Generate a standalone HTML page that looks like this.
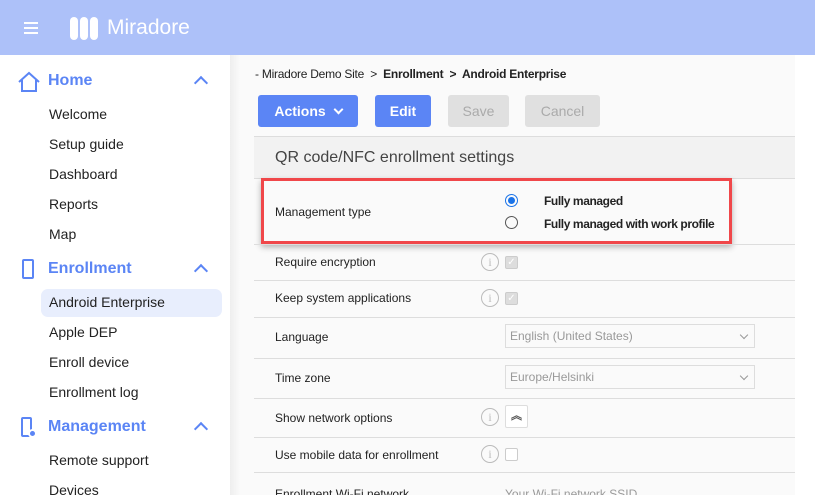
<!DOCTYPE html>
<html><head><meta charset="utf-8"><style>
*{margin:0;padding:0;box-sizing:border-box}
html,body{width:815px;height:495px;overflow:hidden}
body{font-family:"Liberation Sans",sans-serif;background:#fafafa;position:relative}
.hdr{position:absolute;left:0;top:0;width:815px;height:55px;background:#adc1f9}
.side{position:absolute;left:0;top:55px;width:230px;height:440px;background:#fff}
.shadow{position:absolute;left:230px;top:55px;width:10px;height:440px;background:linear-gradient(90deg,#eee,#fafafa)}
.sec{position:absolute;left:48px;font-size:16px;font-weight:bold;color:#5b85f5}
.item{position:absolute;left:49px;font-size:14px;color:#222}
.chev{position:absolute;left:196px;width:10px;height:10px;border-left:2px solid #5b85f5;border-top:2px solid #5b85f5;transform:rotate(45deg)}
.btn{position:absolute;top:95px;height:32px;border-radius:3px;font-size:14px;font-weight:bold;display:flex;align-items:center;justify-content:center}
.row{position:absolute;left:254px;width:541px;border-top:1px solid #ddd;font-size:12px;color:#222}
.row .l{position:absolute;left:21px}
.info{position:absolute;left:227px;width:18px;height:18px;border:1px solid #bbb;border-radius:50%;color:#bbb;font-size:12px;text-align:center;line-height:16px;font-family:"Liberation Serif",serif}
.cb{position:absolute;left:251px;width:13px;height:13px;border:1px solid #ccc;border-radius:2px;background:#ddd;color:#fff;font-size:10px;text-align:center;line-height:11px}
.sel{position:absolute;left:251px;width:250px;height:24px;border:1px solid #ddd;background:#fafafa;color:#999;font-size:12px;padding:4px 4px}
.sel:after{content:"";position:absolute;right:7px;top:7px;width:5px;height:5px;border-right:1.5px solid #999;border-bottom:1.5px solid #999;transform:rotate(45deg)}
</style></head><body>
<div class="hdr">
 <div style="position:absolute;left:24px;top:22px;width:14px;height:2px;background:#fff"></div>
 <div style="position:absolute;left:24px;top:27px;width:14px;height:2px;background:#fff"></div>
 <div style="position:absolute;left:24px;top:32px;width:14px;height:2px;background:#fff"></div>
 <div style="position:absolute;left:70px;top:17px;width:8px;height:23px;border-radius:4px;background:#fff"></div>
 <div style="position:absolute;left:80px;top:17px;width:8px;height:23px;border-radius:4px;background:#fff"></div>
 <div style="position:absolute;left:90px;top:17px;width:8px;height:23px;border-radius:4px;background:#fff"></div>
 <div style="position:absolute;left:107px;top:16px;font-size:21px;color:#fff">Miradore</div>
</div>
<div class="side">
 <svg style="position:absolute;left:17px;top:16px" width="24" height="22" viewBox="0 0 24 22"><path d="M2 11 L12 2 L22 11 M5 9 V20 H19 V9" fill="none" stroke="#5b85f5" stroke-width="2"/></svg>
 <div class="sec" style="top:17px">Home</div><div class="chev" style="top:23px"></div>
 <div class="item" style="top:51px">Welcome</div>
 <div class="item" style="top:81px">Setup guide</div>
 <div class="item" style="top:111px">Dashboard</div>
 <div class="item" style="top:141px">Reports</div>
 <div class="item" style="top:171px">Map</div>
 <div style="position:absolute;left:22px;top:204px;width:12px;height:20px;border:2px solid #5b85f5;border-radius:2px"></div>
 <div class="sec" style="top:205px">Enrollment</div><div class="chev" style="top:211px"></div>
 <div style="position:absolute;left:41px;top:234px;width:181px;height:28px;border-radius:7px;background:#e8eefd"></div>
 <div class="item" style="top:239px">Android Enterprise</div>
 <div class="item" style="top:269px">Apple DEP</div>
 <div class="item" style="top:299px">Enroll device</div>
 <div class="item" style="top:329px">Enrollment log</div>
 <div style="position:absolute;left:21px;top:362px;width:11px;height:20px;border:2px solid #5b85f5;border-radius:2px"></div>
 <div style="position:absolute;left:28px;top:374px;width:9px;height:9px;border-radius:50%;background:#5b85f5;border:2px solid #fff"></div>
 <div class="sec" style="top:363px">Management</div><div class="chev" style="top:369px"></div>
 <div class="item" style="top:397px">Remote support</div>
 <div class="item" style="top:427px">Devices</div>
</div>
<div class="shadow"></div>
<div style="position:absolute;left:255px;top:67px;font-size:12px;color:#222;letter-spacing:-0.25px">- Miradore Demo Site &nbsp;&gt;&nbsp; <b>Enrollment &nbsp;&gt;&nbsp; Android Enterprise</b></div>
<div class="btn" style="left:258px;width:100px;background:#5b85f5;color:#fff">Actions <span style="display:inline-block;width:7px;height:7px;border-right:2px solid #fff;border-bottom:2px solid #fff;transform:rotate(45deg);margin:-4px 0 0 9px"></span></div>
<div class="btn" style="left:375px;width:56px;background:#5b85f5;color:#fff">Edit</div>
<div class="btn" style="left:448px;width:61px;background:#e0e0e0;color:#aaa;font-weight:normal">Save</div>
<div class="btn" style="left:525px;width:75px;background:#e0e0e0;color:#aaa;font-weight:normal">Cancel</div>
<div style="position:absolute;left:254px;top:136px;width:541px;height:42px;background:#f2f2f2;border-top:1px solid #ddd;font-size:16px;color:#444;padding:12px 21px">QR code/NFC enrollment settings</div>
<div class="row" style="top:178px;height:66px"><div class="l" style="top:26px">Management type</div>
 <div style="position:absolute;left:251px;top:15px;width:13px;height:13px;border:1px solid #1a73e8;border-radius:50%"><div style="margin:2px;width:7px;height:7px;border-radius:50%;background:#1a73e8"></div></div>
 <div style="position:absolute;left:251px;top:37px;width:13px;height:13px;border:1px solid #555;border-radius:50%"></div>
 <div style="position:absolute;left:290px;top:15px;font-weight:bold;letter-spacing:-0.4px">Fully managed</div>
 <div style="position:absolute;left:290px;top:38px;font-weight:bold;letter-spacing:-0.4px">Fully managed with work profile</div>
</div>
<div style="position:absolute;left:261px;top:178px;width:471px;height:66px;border:3px solid #f0474a;box-shadow:0 3px 6px rgba(0,0,0,.3)"></div>
<div class="row" style="top:244px;height:36px"><div class="l" style="top:10px">Require encryption</div><div class="info" style="top:8px">i</div><div class="cb" style="top:11px">✓</div></div>
<div class="row" style="top:280px;height:37px"><div class="l" style="top:10px">Keep system applications</div><div class="info" style="top:8px">i</div><div class="cb" style="top:11px">✓</div></div>
<div class="row" style="top:317px;height:41px"><div class="l" style="top:12px">Language</div><div class="sel" style="top:6px">English (United States)</div></div>
<div class="row" style="top:358px;height:40px"><div class="l" style="top:12px">Time zone</div><div class="sel" style="top:6px">Europe/Helsinki</div></div>
<div class="row" style="top:398px;height:39px"><div class="l" style="top:12px">Show network options</div><div class="info" style="top:9px">i</div><div style="position:absolute;left:251px;top:6px;width:23px;height:23px;border:1px solid #ddd;border-radius:2px;background:#fff;text-align:center;font-size:11px;line-height:20px;color:#555;font-weight:bold">︽</div></div>
<div class="row" style="top:437px;height:35px"><div class="l" style="top:10px">Use mobile data for enrollment</div><div class="info" style="top:7px">i</div><div class="cb" style="top:10px;background:#fff"></div></div>
<div class="row" style="top:472px;height:30px"><div class="l" style="top:14px">Enrollment Wi-Fi network</div><div style="position:absolute;left:251px;top:14px;color:#999">Your Wi-Fi network SSID</div></div>
<div style="position:absolute;left:795px;top:55px;width:20px;height:440px;background:#fff"></div>
</body></html>
